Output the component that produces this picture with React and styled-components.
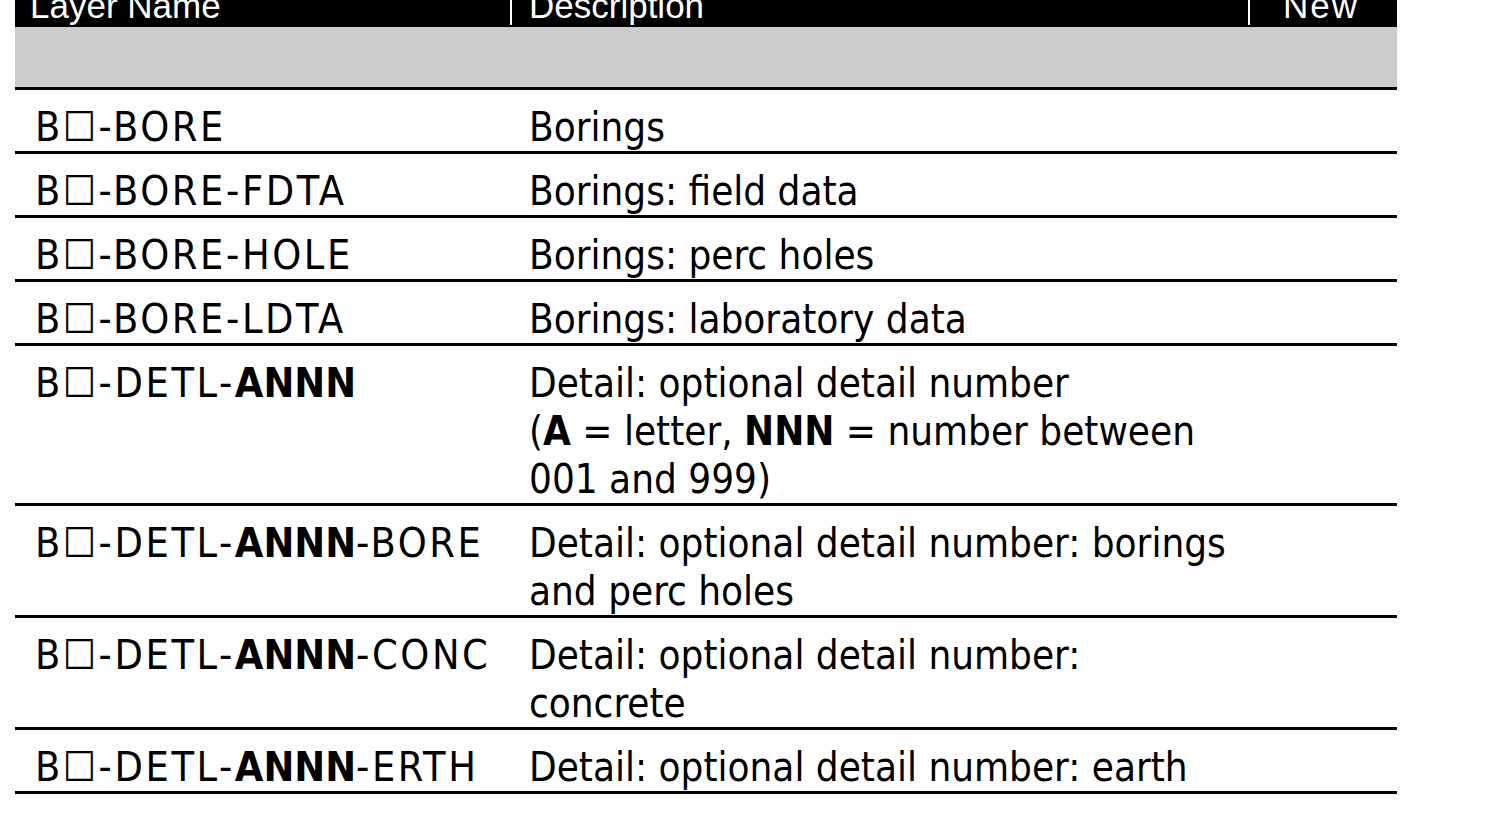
import React from "react";
import styled, { createGlobalStyle } from "styled-components";

const GlobalStyle = createGlobalStyle`
  body {
    margin: 0;
    background: #fff;
  }
`;

const COLS = "495px 738px 149px";

const Table = styled.div`
  width: 1382px;
  margin: -17px 0 0 15px;
`;

const HeaderRow = styled.div`
  display: grid;
  grid-template-columns: ${COLS};
  background: #000;
  padding-bottom: 2px;
`;

const HeadCell = styled.div`
  height: 42px;
  line-height: 46px;
  color: #fff;
  font-family: "Liberation Sans", Arial, sans-serif;
  font-size: 35px;
  padding-left: ${(p) => p.$pad || "15px"};
  border-left: ${(p) => (p.$divider ? "2px solid #fff" : "none")};
  letter-spacing: ${(p) => p.$spacing || "0"};
  overflow: visible;
`;

const Band = styled.div`
  height: 60px;
  background: #ccc;
  border-bottom: 3px solid #000;
`;

const Row = styled.div`
  display: grid;
  grid-template-columns: ${COLS};
  padding-top: 13px;
  border-bottom: 3px solid #000;
  font-family: "DejaVu Sans Condensed", "DejaVu Sans", sans-serif;
  font-size: 41px;
  line-height: 48px;
  color: #000;
`;

const NameCell = styled.div`
  padding-left: 20px;
  letter-spacing: 2.6px;
  white-space: nowrap;
`;

const DescCell = styled.div`
  padding-left: 19px;
  font-size: 40px;
`;

const Strong = styled.b`
  font-weight: bold;
  letter-spacing: 0;
`;

const rows = [
  { base: "B☐-BORE", desc: ["Borings"] },
  { base: "B☐-BORE-FDTA", desc: ["Borings: field data"] },
  { base: "B☐-BORE-HOLE", desc: ["Borings: perc holes"] },
  { base: "B☐-BORE-LDTA", desc: ["Borings: laboratory data"] },
  {
    base: "B☐-DETL-",
    code: true,
    desc: [
      "Detail: optional detail number",
      <>
        (<Strong>A</Strong> = letter, <Strong>NNN</Strong> = number between
      </>,
      "001 and 999)",
    ],
  },
  {
    base: "B☐-DETL-",
    code: true,
    suffix: "-BORE",
    desc: ["Detail: optional detail number: borings", "and perc holes"],
  },
  {
    base: "B☐-DETL-",
    code: true,
    suffix: "-CONC",
    desc: ["Detail: optional detail number:", "concrete"],
  },
  {
    base: "B☐-DETL-",
    code: true,
    suffix: "-ERTH",
    desc: ["Detail: optional detail number: earth"],
  },
];

export default function App() {
  return (
    <>
      <GlobalStyle />
      <Table>
        <HeaderRow>
          <HeadCell>Layer Name</HeadCell>
          <HeadCell $divider $pad="17px">
            Description
          </HeadCell>
          <HeadCell $divider $pad="33px" $spacing="2px">
            New
          </HeadCell>
        </HeaderRow>
        <Band />
        {rows.map((r, i) => (
          <Row key={i}>
            <NameCell>
              {r.base}
              {r.code && <Strong>ANNN</Strong>}
              {r.suffix}
            </NameCell>
            <DescCell>
              {r.desc.map((line, j) => (
                <div key={j}>{line}</div>
              ))}
            </DescCell>
            <div />
          </Row>
        ))}
      </Table>
    </>
  );
}
